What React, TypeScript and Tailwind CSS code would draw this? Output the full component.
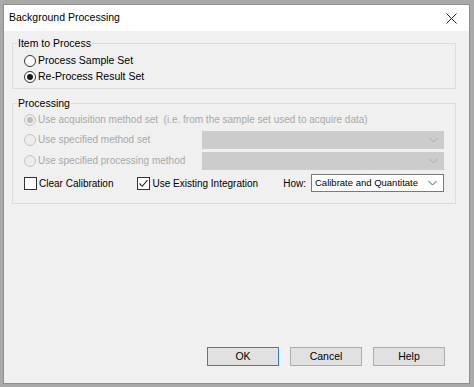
import React from "react";

const font = "font-['Liberation_Sans',Arial,sans-serif]";

function Radio({ checked, disabled }: { checked?: boolean; disabled?: boolean }) {
  return (
    <span
      className={`flex h-[12px] w-[12px] shrink-0 items-center justify-center rounded-full border ${
        disabled ? "border-[#c4c4c4] bg-[#ececec]" : "border-[#333333] bg-white"
      }`}
    >
      {checked && (
        <span className={`h-[6px] w-[6px] rounded-full ${disabled ? "bg-[#bdbdbd]" : "bg-[#1a1a1a]"}`} />
      )}
    </span>
  );
}

function Checkbox({ checked }: { checked?: boolean }) {
  return (
    <span className="flex h-[13px] w-[13px] shrink-0 items-center justify-center border border-[#333333] bg-white">
      {checked && (
        <svg width="11" height="11" viewBox="0 0 11 11">
          <path d="M1.5 5.5 L4.2 8.3 L9.5 2.2" fill="none" stroke="#222" strokeWidth="1.1" />
        </svg>
      )}
    </span>
  );
}

function Chevron({ color }: { color: string }) {
  return (
    <svg width="9" height="6" viewBox="0 0 9 6">
      <path d="M0.5 1 L4.5 5 L8.5 1" fill="none" stroke={color} strokeWidth="1" />
    </svg>
  );
}

function DisabledSelect() {
  return (
    <div className="ml-auto flex h-[18px] w-[242px] shrink-0 items-center justify-end bg-[#cccccc] pr-[6px]">
      <Chevron color="#a9a9a9" />
    </div>
  );
}

function Button({ label, focused }: { label: string; focused?: boolean }) {
  return (
    <button
      className={`h-[19px] w-[72px] border bg-[#e1e1e1] text-[10.5px] text-black ${
        focused ? "border-[#2b7fd6]" : "border-[#adadad]"
      }`}
    >
      {label}
    </button>
  );
}

export default function App() {
  return (
    <div className={`h-[387px] w-[474px] bg-[#a9a9a9] pl-[3px] pt-[4px] ${font}`}>
      <div className="flex h-[380px] w-[467px] flex-col border border-[#8e8e8e] bg-[#f0f0f0]">
        <div className="flex h-[26px] shrink-0 items-center justify-between bg-white pl-[5px] pr-[12px]">
          <span className="text-[10.5px] text-black">Background Processing</span>
          <svg width="11" height="11" viewBox="0 0 11 11">
            <path d="M0.5 0.5 L10.5 10.5 M10.5 0.5 L0.5 10.5" stroke="#222" strokeWidth="1" />
          </svg>
        </div>

        <div className="flex flex-1 flex-col whitespace-nowrap pl-[8px] pr-[13px] pt-[5px] text-[10px] text-black">
          <fieldset className="h-[53px] border border-[#dcdcdc] pl-[4px]">
            <legend className="px-[1px] text-[10.5px] leading-[14px]">Item to Process</legend>
            <div className="ml-[7px] mt-[3px] flex flex-col text-[10.5px]">
              <label className="flex h-[16px] items-center gap-[2px]">
                <Radio />
                <span>Process Sample Set</span>
              </label>
              <label className="flex h-[16px] items-center gap-[2px]">
                <Radio checked />
                <span>Re-Process Result Set</span>
              </label>
            </div>
          </fieldset>

          <fieldset className="mt-[7px] h-[108px] border border-[#dcdcdc] pl-[4px] pr-[11px]">
            <legend className="px-[1px] text-[10.5px] leading-[14px]">Processing</legend>
            <div className="ml-[7px] flex flex-col text-[#a8a8a8]">
              <label className="flex h-[19px] items-center gap-[2px]">
                <Radio checked disabled />
                <span className="whitespace-pre">Use acquisition method set  (i.e. from the sample set used to acquire data)</span>
              </label>
              <label className="mt-[1px] flex h-[19px] items-center gap-[2px]">
                <Radio disabled />
                <span>Use specified method set</span>
                <DisabledSelect />
              </label>
              <label className="mt-[2px] flex h-[19px] items-center gap-[2px]">
                <Radio disabled />
                <span>Use specified processing method</span>
                <DisabledSelect />
              </label>
              <div className="mt-[4px] flex h-[18px] items-center text-black">
                <label className="flex items-center gap-[2px]">
                  <Checkbox />
                  <span>Clear Calibration</span>
                </label>
                <label className="ml-[24px] flex items-center gap-[2px]">
                  <Checkbox checked />
                  <span>Use Existing Integration</span>
                </label>
                <span className="ml-auto mr-[5px]">How:</span>
                <div className="flex h-[18px] w-[133px] shrink-0 items-center justify-between border border-[#7a7a7a] bg-white pl-[3px] pr-[6px]">
                  <span className="text-[9.5px]">Calibrate and Quantitate</span>
                  <Chevron color="#555" />
                </div>
              </div>
            </div>
          </fieldset>

          <div className="mt-auto flex justify-end gap-[11px] pb-[17px] pr-[11px]">
            <Button label="OK" focused />
            <Button label="Cancel" />
            <Button label="Help" />
          </div>
        </div>
      </div>
    </div>
  );
}
